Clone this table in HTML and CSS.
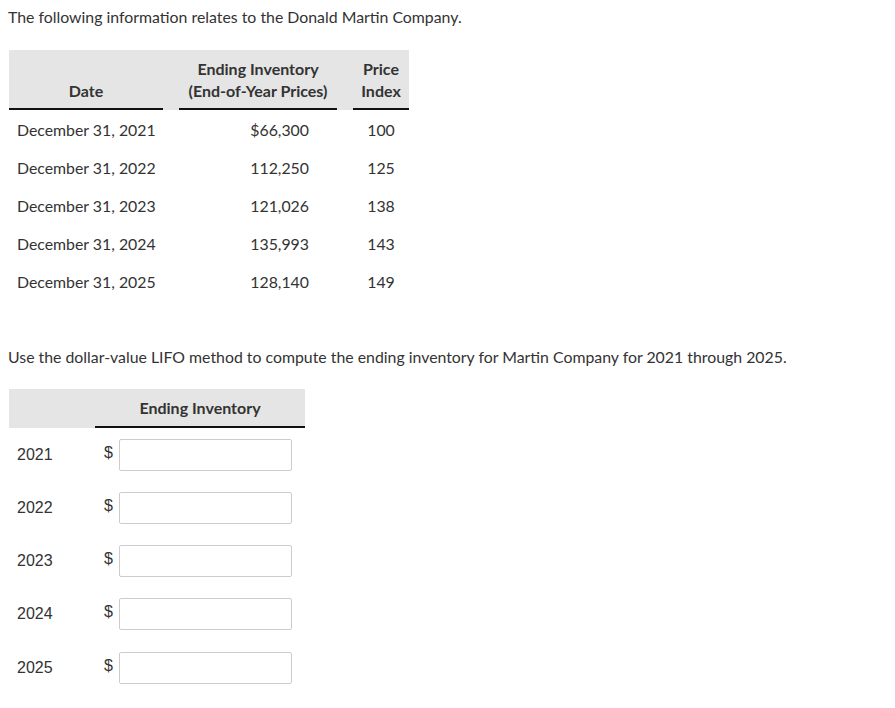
FILE: index.html
```html
<!DOCTYPE html>
<html>
<head>
<meta charset="utf-8">
<link rel="stylesheet" href="styles.css">
</head>
<body>
<p class="intro">The following information relates to the Donald Martin Company.</p>

<div class="info">
  <div class="head">
    <div class="hcell c-date">Date</div>
    <div class="hcell c-inv">Ending Inventory<br>(End-of-Year Prices)</div>
    <div class="hcell c-idx">Price<br>Index</div>
  </div>
  <div class="row"><div class="c-date">December 31, 2021</div><div class="c-inv">$66,300</div><div class="c-idx">100</div></div>
  <div class="row"><div class="c-date">December 31, 2022</div><div class="c-inv">112,250</div><div class="c-idx">125</div></div>
  <div class="row"><div class="c-date">December 31, 2023</div><div class="c-inv">121,026</div><div class="c-idx">138</div></div>
  <div class="row"><div class="c-date">December 31, 2024</div><div class="c-inv">135,993</div><div class="c-idx">143</div></div>
  <div class="row"><div class="c-date">December 31, 2025</div><div class="c-inv">128,140</div><div class="c-idx">149</div></div>
</div>

<p class="task">Use the dollar-value LIFO method to compute the ending inventory for Martin Company for 2021 through 2025.</p>

<div class="answer">
  <div class="ahead">
    <div class="aspace"></div>
    <div class="ahcell">Ending Inventory</div>
  </div>
  <div class="arow"><div class="year">2021</div><div class="cur">$</div><input class="field" type="text"></div>
  <div class="arow"><div class="year">2022</div><div class="cur">$</div><input class="field" type="text"></div>
  <div class="arow"><div class="year">2023</div><div class="cur">$</div><input class="field" type="text"></div>
  <div class="arow"><div class="year">2024</div><div class="cur">$</div><input class="field" type="text"></div>
  <div class="arow"><div class="year">2025</div><div class="cur">$</div><input class="field" type="text"></div>
</div>
</body>
</html>
```

FILE: styles.css
```css
body {
  margin: 0;
  padding: 0 8px;
  font-family: Lato, "Noto Sans", sans-serif;
  font-size: 15.85px;
  color: #333;
  background: #fff;
}
.intro {
  margin: 0;
  padding-top: 7px;
  line-height: 20px;
}
.info {
  margin-top: 23px;
  margin-left: 1px;
  width: 400px;
}
.head {
  display: grid;
  grid-template-columns: 154px 158px 56px;
  column-gap: 16px;
  background: #e5e5e5;
  height: 60px;
}
.hcell {
  font-weight: bold;
  font-size: 16px;
  text-align: center;
  line-height: 22px;
  border-bottom: 2px solid #111;
  display: flex;
  flex-direction: column;
  justify-content: flex-end;
  padding-bottom: 6px;
}
.row {
  display: grid;
  grid-template-columns: 154px 158px 56px;
  column-gap: 16px;
  height: 38px;
  align-items: center;
}
.row .c-date { padding-left: 8px; }
.row .c-inv { text-align: right; padding-right: 28px; }
.row .c-idx { text-align: center; }
.task {
  margin: 0;
  margin-top: 47px;
  line-height: 20px;
}
.answer {
  margin-top: 22px;
  margin-left: 1px;
  width: 296px;
}
.ahead {
  display: flex;
  background: #e5e5e5;
  height: 39px;
}
.aspace { width: 86px; }
.ahcell {
  flex: 1;
  font-weight: bold;
  font-size: 16px;
  text-align: center;
  line-height: 22px;
  padding-top: 8px;
  border-bottom: 2px solid #111;
  box-sizing: border-box;
}
.arow {
  display: flex;
  align-items: center;
  height: 32px;
  margin-top: 21px;
}
.ahead + .arow { margin-top: 11px; }
.arow:last-child { margin-top: 22px; }
.year {
  width: 86px;
  padding-left: 8px;
  box-sizing: border-box;
  font-family: "Liberation Sans", Arial, sans-serif;
  font-size: 16px;
}
.cur {
  width: 24px;
  padding-left: 9px;
  box-sizing: border-box;
  font-family: "Liberation Sans", Arial, sans-serif;
  font-size: 16px;
  margin-top: -4px;
}
.field {
  width: 173px;
  height: 32px;
  box-sizing: border-box;
  border: 1px solid #ccc;
  border-radius: 2px;
  margin: 0;
  padding: 0 6px;
  font: inherit;
}
```
